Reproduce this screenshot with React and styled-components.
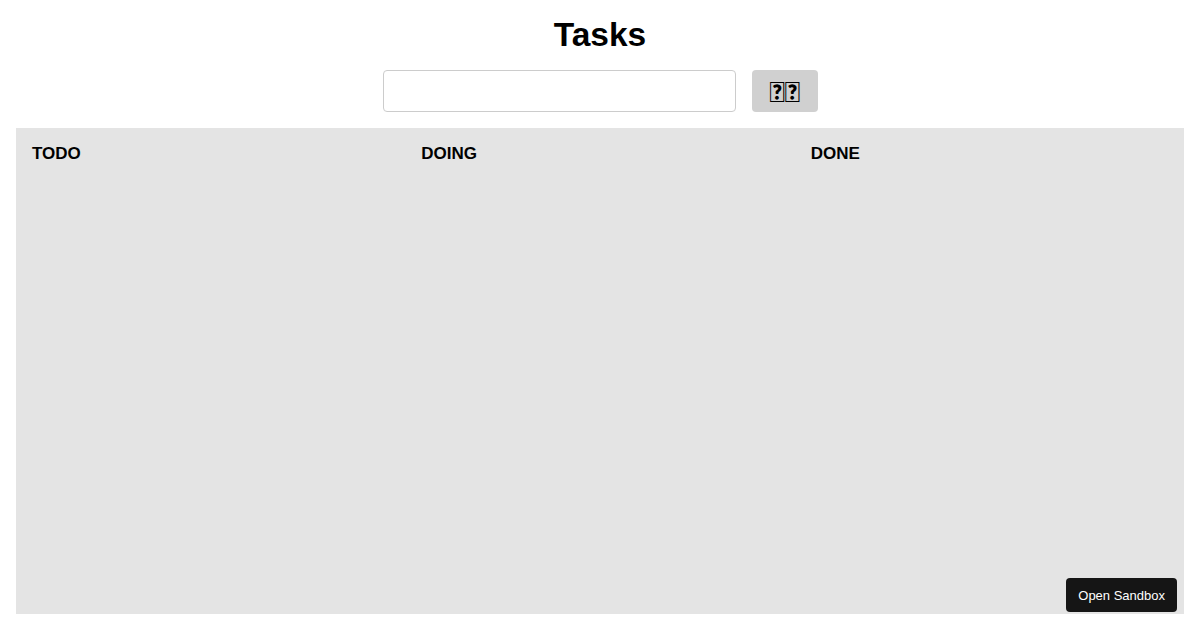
import React, { useState } from 'react'
import styled, { createGlobalStyle } from 'styled-components'

const GlobalStyle = createGlobalStyle`
  * {
    box-sizing: border-box;
  }
  body {
    margin: 0;
    font-family: 'Liberation Sans', Arial, sans-serif;
    color: #000;
    background: #fff;
  }
`

const Page = styled.div`
  height: 100vh;
  padding: 16px;
  display: flex;
  flex-direction: column;
  gap: 16px;
`

const Title = styled.h1`
  margin: 0;
  font-size: 33.5px;
  line-height: 38px;
  font-weight: 700;
  text-align: center;
`

const Form = styled.form`
  display: flex;
  justify-content: center;
  gap: 16px;
`

const Input = styled.input`
  width: 353px;
  height: 42px;
  padding: 0 12px;
  border: 1px solid #ccc;
  border-radius: 4px;
  font-size: 16px;
  font-family: inherit;
  outline: none;
`

// the label glyphs have no font here, so they show as missing-glyph boxes
const AddButton = styled.button`
  width: 66px;
  height: 42px;
  padding: 0;
  border: none;
  border-radius: 4px;
  background: #d0d0d0;
  color: #000;
  font-family: Lato, sans-serif;
  font-size: 28px;
  font-weight: 700;
  line-height: 42px;
  cursor: pointer;
`

const Board = styled.div`
  flex: 1;
  display: grid;
  grid-template-columns: repeat(3, 1fr);
  background: #e4e4e4;
`

const Column = styled.section`
  padding: 16px;
`

const ColumnTitle = styled.h2`
  margin: 0;
  font-size: 17px;
  line-height: 19px;
  font-weight: 700;
`

const SandboxButton = styled.a`
  position: fixed;
  right: 23px;
  bottom: 18px;
  height: 34px;
  padding: 0 12px;
  display: flex;
  align-items: center;
  background: #151515;
  color: #fff;
  border-radius: 4px;
  font-size: 13px;
  text-decoration: none;
  cursor: pointer;
`

const columns = ['TODO', 'DOING', 'DONE']

export default function App() {
  const [text, setText] = useState('')
  return (
    <>
      <GlobalStyle />
      <Page>
        <Title>Tasks</Title>
        <Form onSubmit={e => e.preventDefault()}>
          <Input value={text} onChange={e => setText(e.target.value)} />
          <AddButton type="submit">{'\uE000\uE001'}</AddButton>
        </Form>
        <Board>
          {columns.map(name => (
            <Column key={name}>
              <ColumnTitle>{name}</ColumnTitle>
            </Column>
          ))}
        </Board>
      </Page>
      <SandboxButton>Open Sandbox</SandboxButton>
    </>
  )
}
